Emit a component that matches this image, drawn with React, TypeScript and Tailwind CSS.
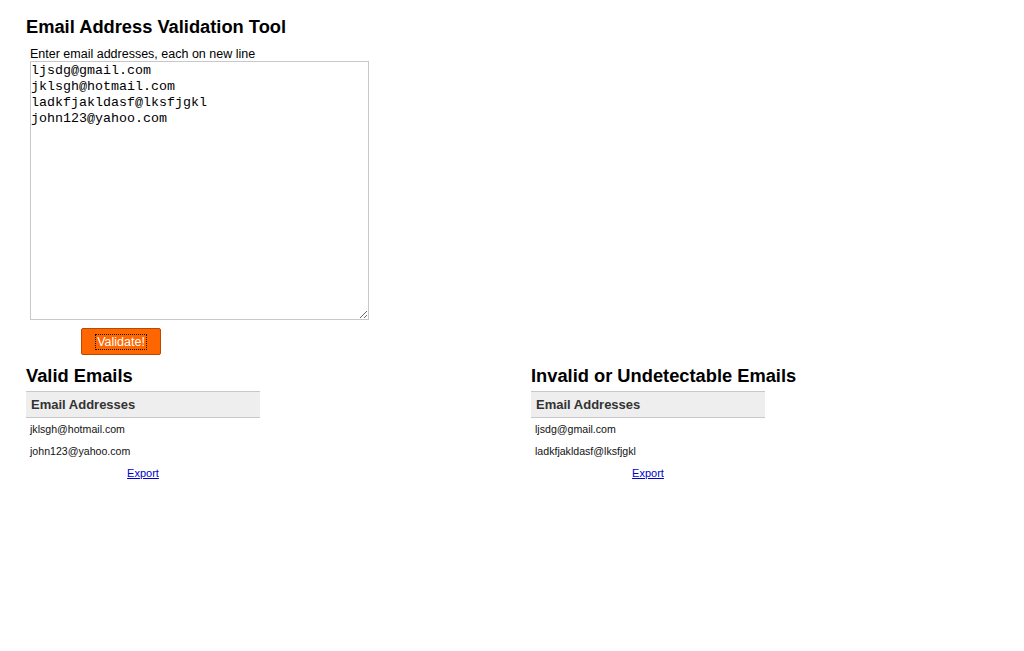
import React from 'react';

const valid = ['jklsgh@hotmail.com', 'john123@yahoo.com'];
const invalid = ['ljsdg@gmail.com', 'ladkfjakldasf@lksfjgkl'];

const ResultTable = ({ title, emails }: { title: string; emails: string[] }) => (
    <div className="w-[505px] shrink-0">
        <h2 className="text-[18.3px] font-bold leading-[22px] text-black mb-[4px]">{title}</h2>
        <div className="w-[234px]">
            <div className="h-[27px] bg-[#eeeeee] border-y border-[#c8c8c8] flex items-center px-[5px] text-[13px] font-bold text-[#333]">
                Email Addresses
            </div>
            <div className="pt-[1px]">
                {emails.map((e) => (
                    <div key={e} className="h-[22px] flex items-center px-[4px] text-[10.6px] text-[#111]">
                        {e}
                    </div>
                ))}
            </div>
            <div className="text-center text-[11px] leading-[14px] pt-[3px]">
                <a href="#" className="text-[#0000cc] underline">Export</a>
            </div>
        </div>
    </div>
);

const App = () => {
    return (
        <div className="bg-white w-[1024px] h-[651px] pl-[26px] pt-[16px] font-['Liberation_Sans',Arial,sans-serif] text-black overflow-hidden">
            <h1 className="text-[18.3px] font-bold leading-[22px]">Email Address Validation Tool</h1>
            <div className="pl-[4px] pt-[9px]">
                <label className="block text-[12.5px] leading-[14px]">Enter email addresses, each on new line</label>
                <textarea
                    className="block w-[339px] h-[259px] border border-[#c8c8c8] pl-0 pr-[1px] pt-[1px] pb-0 text-[13.33px] leading-[16px] font-['Liberation_Mono','Courier_New',monospace] text-black resize-y"
                    defaultValue={'ljsdg@gmail.com\njklsgh@hotmail.com\nladkfjakldasf@lksfjgkl\njohn123@yahoo.com'}
                />
                <div className="pl-[51px] pt-[8px]">
                    <button className="w-[80px] h-[27px] bg-[#ff6600] border border-[#b84a00] rounded-[2px] text-white text-[12.5px] flex items-center justify-center">
                        <span className="outline-1 outline-dotted outline-black px-[1px] leading-[14px]">Validate!</span>
                    </button>
                </div>
            </div>
            <div className="flex pt-[10px]">
                <ResultTable title="Valid Emails" emails={valid} />
                <ResultTable title="Invalid or Undetectable Emails" emails={invalid} />
            </div>
        </div>
    );
};

export default App;
